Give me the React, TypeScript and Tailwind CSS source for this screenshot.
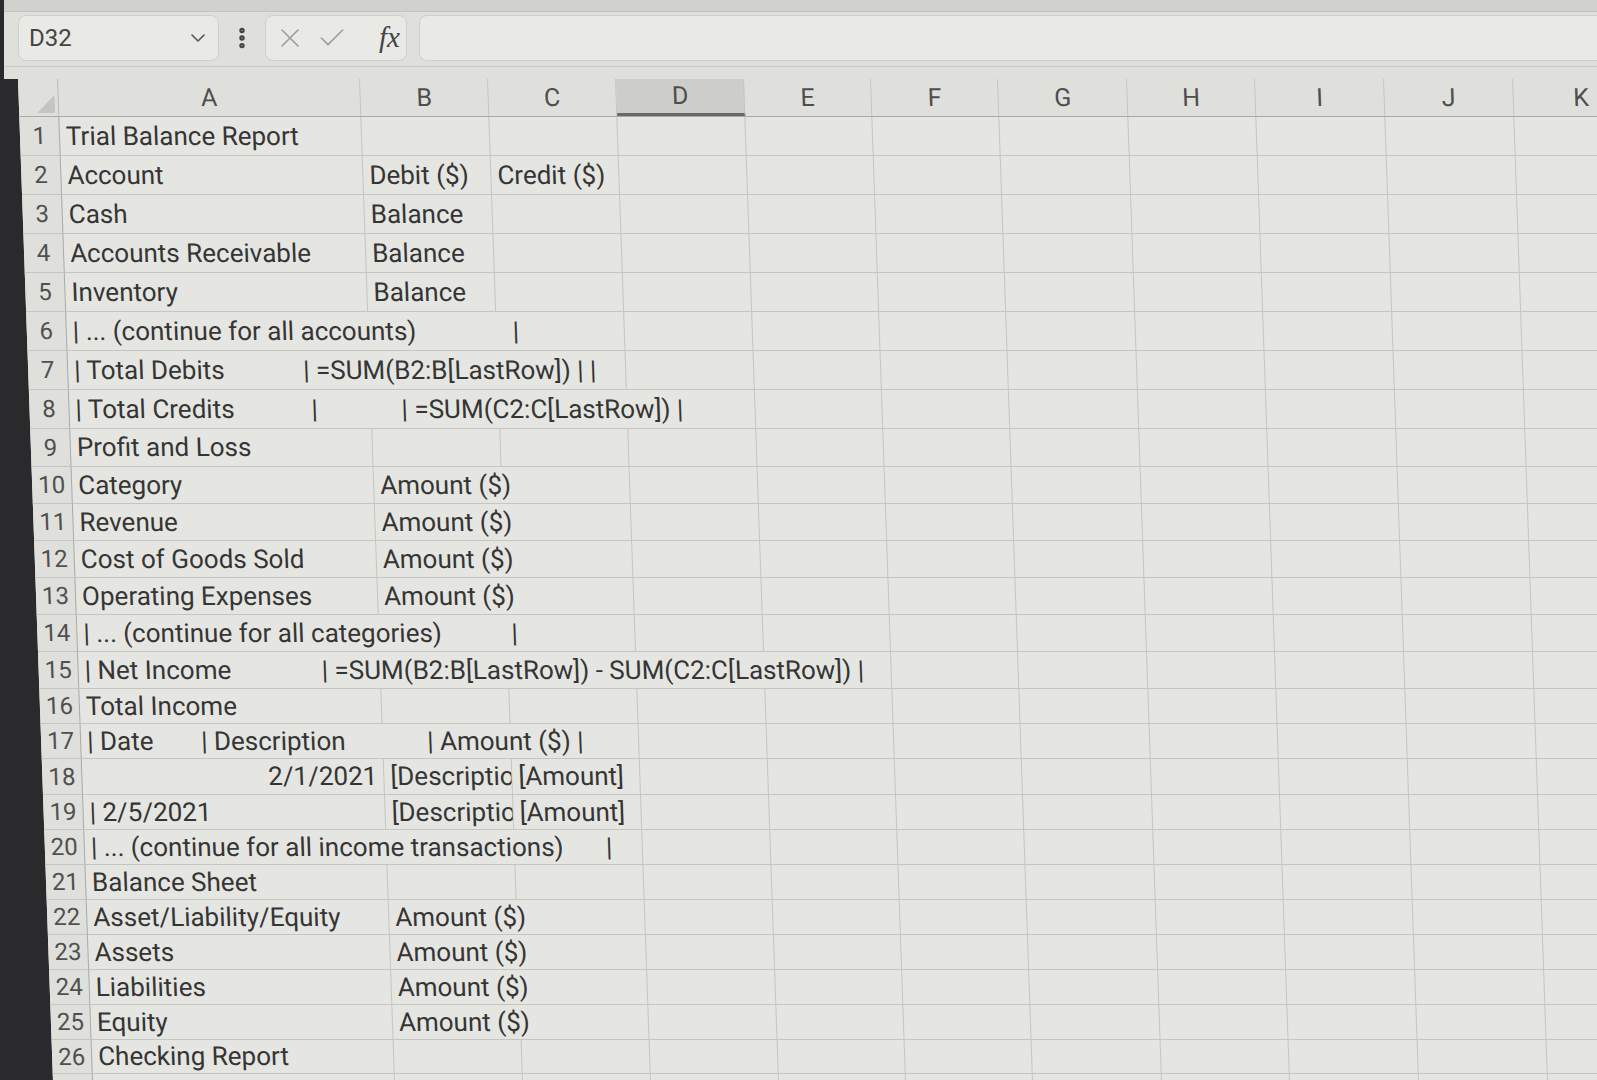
import { ChevronDown, EllipsisVertical, X, Check } from 'lucide-react';

type Cell = {
  t?: string;
  span?: number;
  w?: string;
  parts?: [string, string][];
  right?: boolean;
};

const cols = [
  { k: 'A', w: 'w-[302px]' },
  { k: 'B', w: 'w-[128px]' },
  { k: 'C', w: 'w-[128px]' },
  { k: 'D', w: 'w-[128px]' },
  { k: 'E', w: 'w-[127px]' },
  { k: 'F', w: 'w-[127px]' },
  { k: 'G', w: 'w-[129px]' },
  { k: 'H', w: 'w-[128px]' },
  { k: 'I', w: 'w-[129px]' },
  { k: 'J', w: 'w-[129px]' },
  { k: 'K', w: 'w-[136px]' },
];

// B overflows into the empty C cell
const amt: Cell = { t: 'Amount ($)', span: 2, w: 'w-[256px]' };

const rows: { h: string; cells: Cell[] }[] = [
  { h: 'h-[39px]', cells: [{ t: 'Trial Balance Report' }] },
  { h: 'h-[39px]', cells: [{ t: 'Account' }, { t: 'Debit ($)' }, { t: 'Credit ($)' }] },
  { h: 'h-[39px]', cells: [{ t: 'Cash' }, { t: 'Balance' }] },
  { h: 'h-[39px]', cells: [{ t: 'Accounts Receivable' }, { t: 'Balance' }] },
  { h: 'h-[39px]', cells: [{ t: 'Inventory' }, { t: 'Balance' }] },
  {
    h: 'h-[39px]',
    cells: [{ span: 3, w: 'w-[558px]', parts: [['| ... (continue for all accounts)', 'w-[440px]'], ['|', '']] }],
  },
  {
    h: 'h-[39px]',
    cells: [{ span: 3, w: 'w-[558px]', parts: [['| Total Debits', 'w-[229px]'], ['| =SUM(B2:B[LastRow]) | |', '']] }],
  },
  {
    h: 'h-[39px]',
    cells: [
      {
        span: 4,
        w: 'w-[686px]',
        parts: [
          ['| Total Credits', 'w-[236px]'],
          ['|', 'w-[90px]'],
          ['| =SUM(C2:C[LastRow]) |', ''],
        ],
      },
    ],
  },
  { h: 'h-[38px]', cells: [{ t: 'Profit and Loss' }] },
  { h: 'h-[37px]', cells: [{ t: 'Category' }, amt] },
  { h: 'h-[37px]', cells: [{ t: 'Revenue' }, amt] },
  { h: 'h-[37px]', cells: [{ t: 'Cost of Goods Sold' }, amt] },
  { h: 'h-[37px]', cells: [{ t: 'Operating Expenses' }, amt] },
  {
    h: 'h-[37px]',
    cells: [{ span: 3, w: 'w-[558px]', parts: [['| ... (continue for all categories)', 'w-[428px]'], ['|', '']] }],
  },
  {
    h: 'h-[37px]',
    cells: [
      {
        span: 5,
        w: 'w-[813px]',
        parts: [
          ['| Net Income', 'w-[237px]'],
          ['| =SUM(B2:B[LastRow]) - SUM(C2:C[LastRow]) |', ''],
        ],
      },
    ],
  },
  { h: 'h-[35px]', cells: [{ t: 'Total Income' }] },
  {
    h: 'h-[35px]',
    cells: [
      {
        span: 3,
        w: 'w-[558px]',
        parts: [
          ['| Date', 'w-[114px]'],
          ['| Description', 'w-[226px]'],
          ['| Amount ($) |', ''],
        ],
      },
    ],
  },
  { h: 'h-[36px]', cells: [{ t: '2/1/2021', right: true }, { t: '[Description]' }, { t: '[Amount]' }] },
  { h: 'h-[35px]', cells: [{ t: '| 2/5/2021' }, { t: '[Description]' }, { t: '[Amount]' }] },
  {
    h: 'h-[35px]',
    cells: [
      { span: 3, w: 'w-[558px]', parts: [['| ... (continue for all income transactions)', 'w-[515px]'], ['|', '']] },
    ],
  },
  { h: 'h-[35px]', cells: [{ t: 'Balance Sheet' }] },
  { h: 'h-[35px]', cells: [{ t: 'Asset/Liability/Equity' }, amt] },
  { h: 'h-[35px]', cells: [{ t: 'Assets' }, amt] },
  { h: 'h-[35px]', cells: [{ t: 'Liabilities' }, amt] },
  { h: 'h-[35px]', cells: [{ t: 'Equity' }, amt] },
  { h: 'h-[34px]', cells: [{ t: 'Checking Report' }] },
  { h: 'h-[34px]', cells: [] },
];

const line = 'border-[#c4c6c1]';

function GridRow({ n, h, cells }: { n: number; h: string; cells: Cell[] }) {
  const out = [];
  let c = 0;
  cells.forEach((cell, i) => {
    const span = cell.span ?? 1;
    const w = cell.w ?? cols[c].w;
    out.push(
      <div
        key={`c${i}`}
        className={`${w} shrink-0 h-full flex items-center px-[6px] overflow-hidden whitespace-nowrap border-r border-b ${line} ${
          cell.right ? 'justify-end' : ''
        }`}
      >
        {cell.parts
          ? cell.parts.map(([txt, pw], j) => (
              <span key={j} className={`${pw} shrink-0`}>
                {txt}
              </span>
            ))
          : cell.t}
      </div>
    );
    c += span;
  });
  for (; c < cols.length; c++) {
    out.push(<div key={`e${c}`} className={`${cols[c].w} shrink-0 h-full border-r border-b ${line}`} />);
  }
  return (
    <div className={`flex ${h}`}>
      <div className={`w-[40px] shrink-0 h-full flex items-center justify-center text-[24px] text-[#505050] bg-[#dfe0dc] border-r border-b border-r-[#a9aba6] ${line}`}>
        {n}
      </div>
      {out}
    </div>
  );
}

export default function App() {
  return (
    <div className="h-[1080px] w-full overflow-hidden bg-[#2a2a2d] font-['Roboto',sans-serif]">
      <div className="ml-[4px] h-[79px] bg-[#dfe0dc]">
        <div className="h-[12px] bg-[#d1d2ce] border-b border-[#c3c4c0]" />
        <div className="mt-[3px] h-[46px] flex items-center pl-[14px]">
          <div className="w-[201px] h-full rounded-lg border border-[#cfd0cb] bg-[#e9e9e6] flex items-center justify-between pl-[10px] pr-[8px]">
            <span className="text-[24px] text-[#444]">D32</span>
            <ChevronDown className="w-[24px] h-[24px] text-[#555]" strokeWidth={1.6} />
          </div>
          <div className="w-[46px] flex justify-center">
            <EllipsisVertical className="w-[26px] h-[26px] text-[#444]" strokeWidth={3} />
          </div>
          <div className="w-[142px] h-full rounded-lg border border-[#cfd0cb] bg-[#e9e9e6] flex items-center pl-[8px] pr-[6px] gap-[10px]">
            <X className="w-[32px] h-[32px] text-[#9c9c9a]" strokeWidth={1.2} />
            <Check className="w-[32px] h-[32px] text-[#9c9c9a]" strokeWidth={1.2} />
            <span className="ml-auto text-[29px] italic text-[#444] font-['Liberation_Serif',serif]">fx</span>
          </div>
          <div className="ml-[12px] flex-1 h-full rounded-l-lg border border-r-0 border-[#cfd0cb] bg-[#e9e9e6]" />
        </div>
        <div className="mt-[5px] border-b border-[#cbccc8]" />
      </div>
      <div className="ml-[18px] origin-top-left skew-x-[2deg] w-[1720px] bg-[#e5e6e2] text-[26px] text-[#353535]">
        <div className="flex h-[38px] bg-[#dfe0dc] border-b border-[#a9aba6]">
          <div className="w-[40px] shrink-0 h-full border-r border-[#b9bbb6] flex items-end justify-end p-[3px]">
            <svg width="18" height="18" viewBox="0 0 18 18">
              <path d="M18 0 L18 18 L0 18 Z" fill="#c4c5c1" />
            </svg>
          </div>
          {cols.map((c) => (
            <div
              key={c.k}
              className={`${c.w} shrink-0 h-full flex items-center justify-center text-[25px] text-[#4e4e4e] border-r ${line} ${
                c.k === 'D' ? 'bg-[#cdceca] border-b-[3px] border-b-[#6a6a6a]' : ''
              }`}
            >
              {c.k}
            </div>
          ))}
        </div>
        {rows.map((r, i) => (
          <GridRow key={i} n={i + 1} h={r.h} cells={r.cells} />
        ))}
      </div>
    </div>
  );
}
